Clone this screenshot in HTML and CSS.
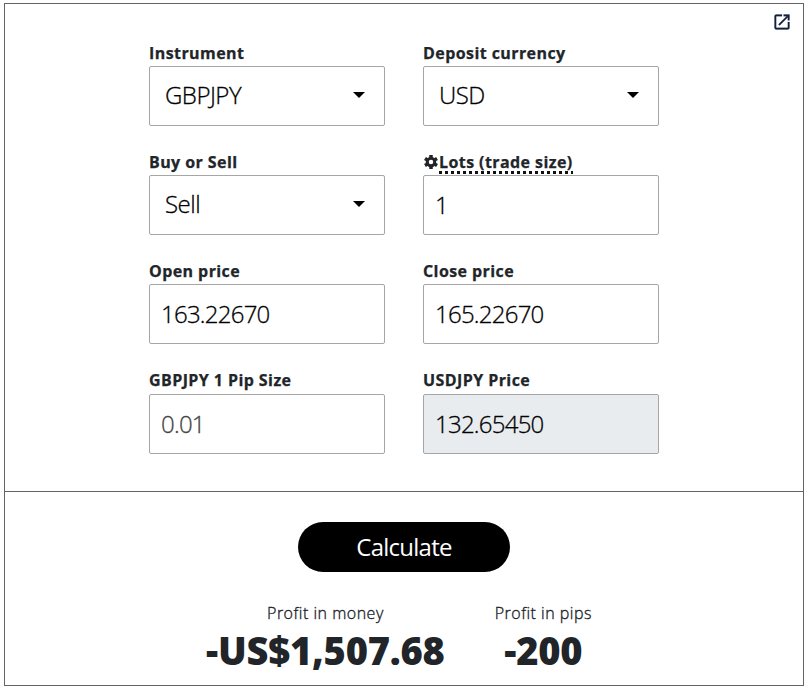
FILE: index.html
```html
<!DOCTYPE html>
<html lang="en">
<head>
<meta charset="utf-8">
<title>Profit calculator</title>
<link rel="stylesheet" href="styles.css">
</head>
<body>
<main class="card">
  <svg class="popout" viewBox="0 0 24 24"><path d="M19 19H5V5h7V3H5a2 2 0 0 0-2 2v14a2 2 0 0 0 2 2h14c1.1 0 2-.9 2-2v-7h-2v7zM14 3v2h3.59l-9.83 9.83 1.41 1.41L19 6.41V10h2V3h-7z"/></svg>
  <section class="form">
    <div class="field"><label>Instrument</label><div class="box select"><span>GBPJPY</span><i class="caret"></i></div></div>
    <div class="field"><label>Deposit currency</label><div class="box select"><span>USD</span><i class="caret"></i></div></div>
    <div class="field"><label>Buy or Sell</label><div class="box select"><span>Sell</span><i class="caret"></i></div></div>
    <div class="field"><label class="with-icon"><svg class="gear" viewBox="0 0 16 16"><circle cx="8" cy="8" r="4.3" fill="none" stroke="currentColor" stroke-width="3.4"/><path d="M8 0v4M8 12v4M1.1 4l3.4 2M11.5 10l3.4 2M1.1 12l3.4-2M11.5 6l3.4-2" stroke="currentColor" stroke-width="4"/></svg><span class="hint">Lots (trade size)</span></label><div class="box">1</div></div>
    <div class="field"><label>Open price</label><div class="box">163.22670</div></div>
    <div class="field"><label>Close price</label><div class="box">165.22670</div></div>
    <div class="field last"><label>GBPJPY 1 Pip Size</label><div class="box muted">0.01</div></div>
    <div class="field last"><label>USDJPY Price</label><div class="box filled">132.65450</div></div>
  </section>
  <section class="result">
    <button class="calc">Calculate</button>
    <div class="totals">
      <div class="total"><span>Profit in money</span><strong>-US$1,507.68</strong></div>
      <div class="total"><span>Profit in pips</span><strong>-200</strong></div>
    </div>
  </section>
</main>
</body>
</html>
```
FILE: styles.css
```css
* { box-sizing: border-box; }
body { margin: 0; background: #fff; color: #212529; font-family: "Open Sans", sans-serif; font-size: 16px; line-height: 24px; }
.card { position: relative; width: 800px; height: 683px; margin: 3px 0 0 4px; border: 1px solid #646464; }
.popout { position: absolute; top: 8px; right: 11px; width: 20px; height: 20px; fill: #14213d; stroke: #14213d; stroke-width: .3; }
.form { display: grid; grid-template-columns: 236px 236px; grid-auto-rows: 109.2px; column-gap: 38px; height: 488px; padding: 37px 0 0 144px; border-bottom: 1px solid #646464; }
label { display: block; height: 25px; font-weight: 700; letter-spacing: .42px; -webkit-text-stroke: .25px currentColor; white-space: nowrap; }
.last label { height: 26px; margin-top: -1px; }
.box { display: flex; align-items: center; height: 60px; padding: 0 11px; border: 1px solid #a6a6a6; border-radius: 2px; color: #000; font-size: 24px; font-weight: 300; letter-spacing: -.75px; -webkit-text-stroke: .3px currentColor; }
.select { justify-content: space-between; padding: 0 19px 2px 15px; letter-spacing: -.5px; }
.caret { border: 6.5px solid transparent; border-top-color: #000; border-bottom: 0; }
.muted { color: #444; }
.filled { background: #e9ecef; }
.with-icon { display: flex; align-items: flex-start; }
.gear { width: 14px; height: 14px; margin: 5px 1px 0 1px; }
.hint { height: 24px; background: repeating-linear-gradient(90deg, #111 0 3px, transparent 3px 6px) 0 21px / 100% 3px no-repeat; }
.result { display: flex; flex-direction: column; align-items: center; padding-top: 30px; }
.calc { width: 212px; height: 50px; padding: 0 0 2px; border: 0; border-radius: 25px; background: #000; color: #fff; font: 400 24px "Open Sans", sans-serif; letter-spacing: -.75px; }
.totals { display: flex; gap: 50px; margin: 29px 10px 0 0; }
.total { display: flex; flex-direction: column; align-items: center; }
.total span { letter-spacing: .5px; font-weight: 300; -webkit-text-stroke: .35px currentColor; }
.total strong { font-size: 38px; line-height: 50px; font-weight: 800; letter-spacing: -.2px; }
```
